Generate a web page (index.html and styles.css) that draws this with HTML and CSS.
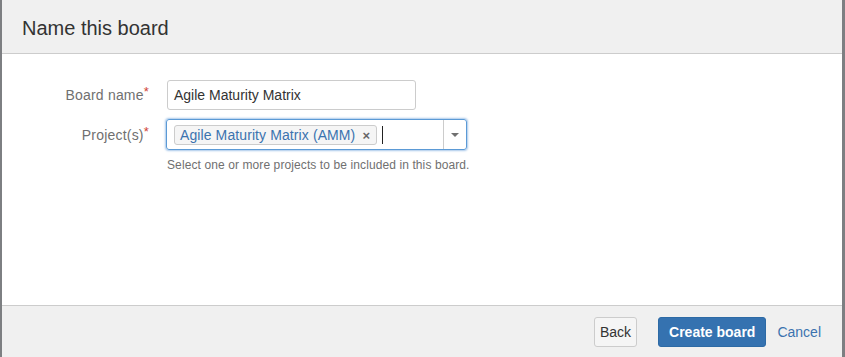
FILE: index.html
```html
<!DOCTYPE html>
<html lang="en">
<head>
    <meta charset="UTF-8">
    <title>Name this board</title>
    <link rel="stylesheet" href="styles.css">
</head>
<body>
    <div class="dialog">
        <div class="dialog-header">
            <h2>Name this board</h2>
        </div>
        <div class="dialog-body">
            <div class="field-row">
                <label class="field-label">Board name<span class="req">*</span></label>
                <div class="text-input">Agile Maturity Matrix</div>
            </div>
            <div class="field-row">
                <label class="field-label">Project(s)<span class="req">*</span></label>
                <div class="multi-select">
                    <div class="ms-items">
                        <span class="ms-tag">Agile Maturity Matrix (AMM)<span class="ms-remove">&times;</span></span>
                        <span class="ms-cursor"></span>
                    </div>
                    <div class="ms-toggle"><span class="caret"></span></div>
                </div>
            </div>
            <div class="field-row">
                <span></span>
                <div class="help-text">Select one or more projects to be included in this board.</div>
            </div>
        </div>
        <div class="dialog-footer">
            <button class="btn">Back</button>
            <button class="btn btn-primary">Create board</button>
            <a class="cancel-link" href="#">Cancel</a>
        </div>
    </div>
</body>
</html>
```

FILE: styles.css
```css
html, body {
    margin: 0;
    height: 100%;
}
body {
    background-color: #7d7f82;
    font-family: 'Liberation Sans', Arial, sans-serif;
    color: #333;
    font-size: 14px;
}
.dialog {
    margin-left: 2px;
    width: 840px;
    height: 357px;
    background-color: #fff;
    display: flex;
    flex-direction: column;
}
.dialog-header {
    background-color: #f0f0f0;
    border-bottom: 1px solid #cccccc;
    height: 53px;
    display: flex;
    align-items: center;
    padding-left: 20px;
}
.dialog-header h2 {
    margin: 0;
    font-size: 20px;
    font-weight: normal;
    color: #333;
    padding-top: 3px;
}
.dialog-body {
    flex: 1;
    padding-top: 26px;
}
.field-row {
    display: grid;
    grid-template-columns: 147px auto;
    column-gap: 18px;
    align-items: center;
    margin-bottom: 9px;
}
.field-label {
    text-align: right;
    color: #707070;
    font-size: 14px;
    letter-spacing: 0.2px;
}
.req {
    color: #d04437;
    position: relative;
    top: -4px;
    font-size: 13px;
}
.text-input {
    width: 235px;
    height: 28px;
    line-height: 28px;
    border: 1px solid #cccccc;
    border-radius: 3px;
    padding: 0 6px;
    color: #333;
}
.multi-select {
    width: 299px;
    height: 29px;
    border: 1px solid #5b9ad6;
    border-radius: 3px;
    box-shadow: 0 0 2px 1px #a9c8ea;
    display: flex;
    margin-left: -1px;
}
.ms-items {
    flex: 1;
    display: flex;
    align-items: center;
    padding-left: 7px;
}
.ms-tag {
    background-color: #f5f5f5;
    border: 1px solid #cccccc;
    border-radius: 3px;
    color: #3b73af;
    height: 18px;
    line-height: 18px;
    padding: 0 6px 0 5px;
    letter-spacing: 0.1px;
}
.ms-remove {
    color: #666;
    font-size: 13px;
    margin-left: 7px;
    font-weight: bold;
}
.ms-cursor {
    width: 1px;
    height: 18px;
    background-color: #222;
    margin-left: 5px;
}
.ms-toggle {
    width: 22px;
    border-left: 1px solid #cccccc;
    display: flex;
    align-items: center;
    justify-content: center;
}
.caret {
    width: 0;
    height: 0;
    border-left: 4px solid transparent;
    border-right: 4px solid transparent;
    border-top: 4px solid #707070;
}
.help-text {
    font-size: 12px;
    color: #707070;
    margin-top: -1px;
    letter-spacing: 0.1px;
}
.dialog-footer {
    background-color: #f0f0f0;
    border-top: 1px solid #cccccc;
    height: 51px;
    display: flex;
    align-items: center;
    justify-content: flex-end;
    padding-right: 21px;
}
.btn {
    font-family: 'Liberation Sans', Arial, sans-serif;
    font-size: 14px;
    height: 30px;
    padding: 0 5px;
    border: 1px solid #cccccc;
    border-radius: 3px;
    background-color: #f5f5f5;
    color: #333;
    margin-right: 21px;
}
.btn-primary {
    background-color: #3572b0;
    border-color: #2d6aa5;
    color: #fff;
    font-weight: bold;
    padding: 0 10px;
    margin-right: 11px;
}
.cancel-link {
    color: #3b73af;
    text-decoration: none;
}
```
